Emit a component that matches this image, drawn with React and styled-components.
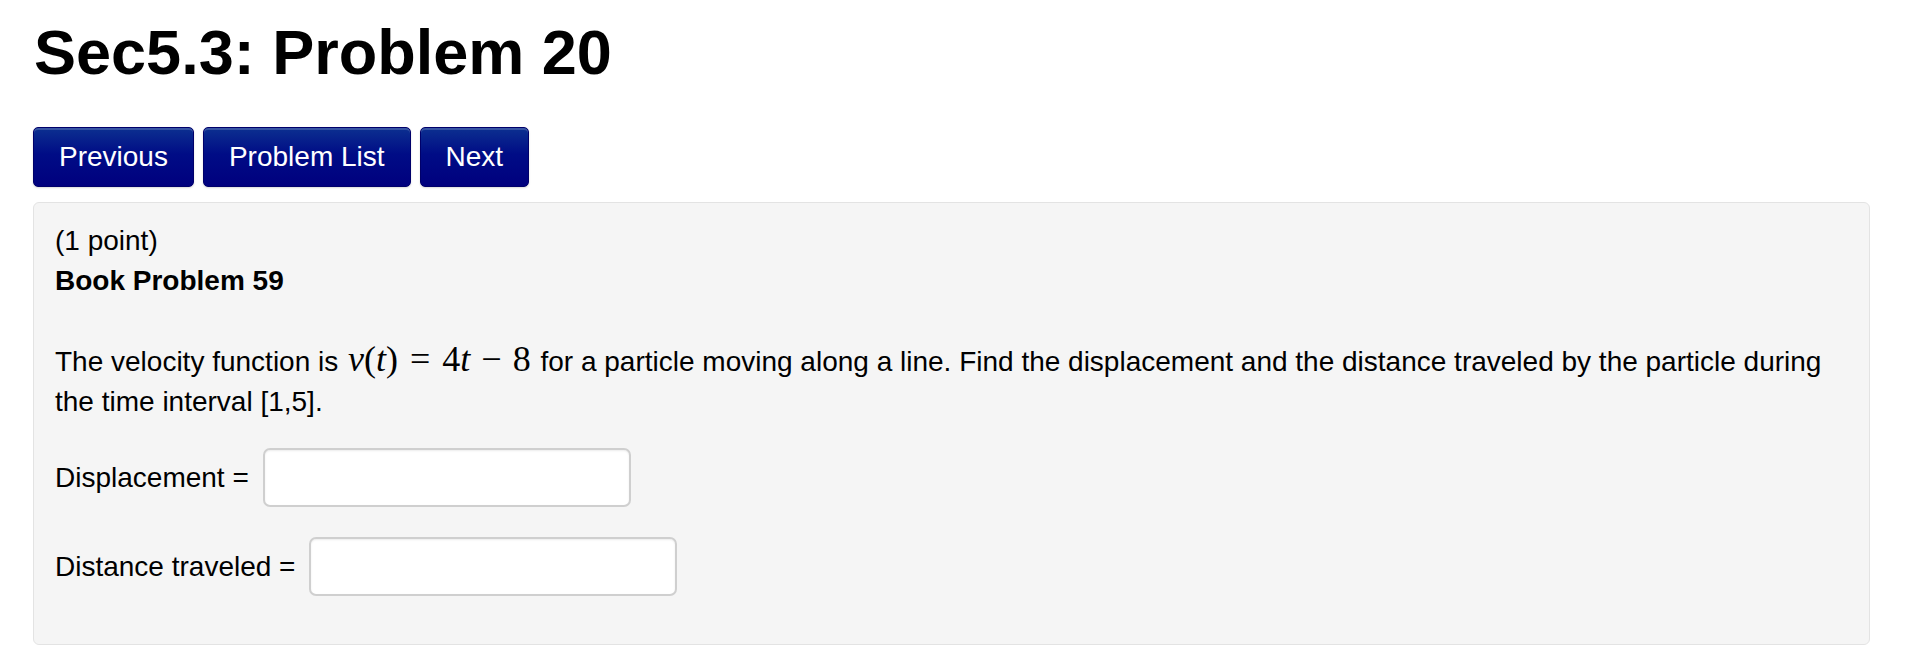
import styled, { createGlobalStyle } from "styled-components";

const GlobalStyle = createGlobalStyle`
  body {
    margin: 0;
    background: #fff;
    color: #000;
    font-family: "Liberation Sans", Arial, sans-serif;
  }
`;

const Page = styled.main`
  padding: 17px 45px 0 33px;
`;

const Title = styled.h1`
  font-size: 63px;
  font-weight: bold;
  line-height: 70px;
  margin: 0 0 40px 1px;
`;

const NavBar = styled.nav`
  display: flex;
  gap: 9px;
  margin-bottom: 15px;
`;

const NavButton = styled.button`
  height: 60px;
  padding: 0 25px;
  font-family: "Liberation Sans", Arial, sans-serif;
  font-size: 28px;
  color: #fff;
  background: linear-gradient(#0c3090, #000c86 45%, #00007e);
  border: 1px solid #00006a;
  border-radius: 5px;
  box-shadow: inset 0 2px 0 rgba(255, 255, 255, 0.18), 0 1px 2px rgba(0, 0, 0, 0.15);
  cursor: pointer;
`;

const Well = styled.section`
  background: #f5f5f5;
  border: 1px solid #e3e3e3;
  border-radius: 6px;
  padding: 18px 21px 48px;
  font-size: 28px;
  line-height: 40px;
`;

const Line = styled.div`
  font-weight: ${(p) => (p.$bold ? "bold" : "normal")};
`;

const Text = styled.p`
  margin: 40px 0 0;
`;

const Math = styled.span`
  font-family: "Liberation Serif", "DejaVu Serif", serif;
  font-size: 36px;
  line-height: 1;
  white-space: nowrap;
  padding: 0 2px;
`;

const Var = styled.i`
  font-style: italic;
`;

const Op = styled.span`
  padding: 0 ${(p) => p.$space || 12}px;
`;

const AnswerRow = styled.label`
  display: flex;
  align-items: center;
  gap: 14px;
  margin-top: ${(p) => p.$top}px;
`;

const AnswerInput = styled.input`
  width: 368px;
  height: 59px;
  box-sizing: border-box;
  border: 2px solid #cfcfcf;
  border-radius: 7px;
  background: #fff;
  box-shadow: inset 0 1px 2px rgba(0, 0, 0, 0.08);
  font-size: 28px;
  padding: 0 10px;
`;

export default function App() {
  return (
    <>
      <GlobalStyle />
      <Page>
        <Title>Sec5.3: Problem 20</Title>
        <NavBar>
          <NavButton>Previous</NavButton>
          <NavButton>Problem List</NavButton>
          <NavButton>Next</NavButton>
        </NavBar>
        <Well>
          <Line>(1 point)</Line>
          <Line $bold>Book Problem 59</Line>
          <Text>
            The velocity function is{" "}
            <Math>
              <Var>v</Var>(<Var>t</Var>)<Op>=</Op>4<Var>t</Var>
              <Op $space={11}>−</Op>8
            </Math>{" "}
            for a particle moving along a line. Find the displacement and the
            distance traveled by the particle during the time interval [1,5].
          </Text>
          <AnswerRow $top={26}>
            Displacement =
            <AnswerInput type="text" />
          </AnswerRow>
          <AnswerRow $top={30}>
            Distance traveled =
            <AnswerInput type="text" />
          </AnswerRow>
        </Well>
      </Page>
    </>
  );
}
